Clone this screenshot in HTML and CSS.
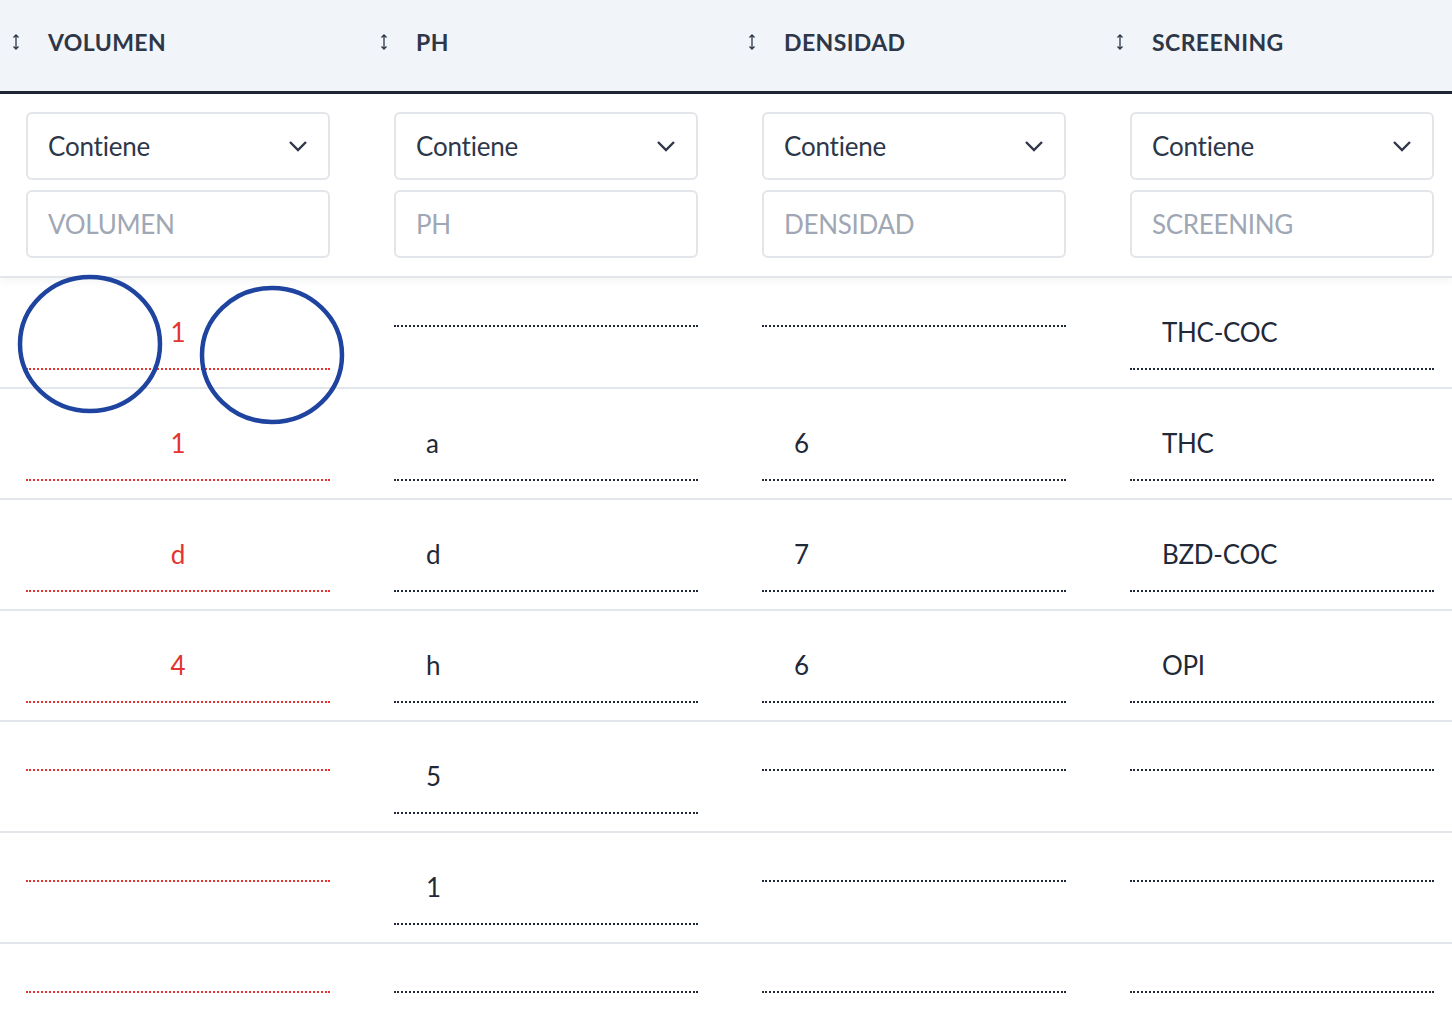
FILE: index.html
```html
<!DOCTYPE html>
<html lang="es">
<head>
  <meta charset="UTF-8">
  <title>Muestras</title>
  <link rel="stylesheet" href="styles.css">
</head>
<body>
  <div class="table">
    <!-- Column headers -->
    <div class="row head">
      <div class="th"><svg class="sort" viewBox="0 0 8 16"><path d="M4 1v14M1.5 3.5L4 1l2.5 2.5M1.5 12.5L4 15l2.5-2.5"/></svg>VOLUMEN</div>
      <div class="th"><svg class="sort" viewBox="0 0 8 16"><path d="M4 1v14M1.5 3.5L4 1l2.5 2.5M1.5 12.5L4 15l2.5-2.5"/></svg>PH</div>
      <div class="th"><svg class="sort" viewBox="0 0 8 16"><path d="M4 1v14M1.5 3.5L4 1l2.5 2.5M1.5 12.5L4 15l2.5-2.5"/></svg>DENSIDAD</div>
      <div class="th"><svg class="sort" viewBox="0 0 8 16"><path d="M4 1v14M1.5 3.5L4 1l2.5 2.5M1.5 12.5L4 15l2.5-2.5"/></svg>SCREENING</div>
    </div>

    <!-- Filters -->
    <div class="row filters">
      <div class="filter">
        <div class="select">Contiene<svg class="chev" viewBox="0 0 20 12"><path d="M2 2l8 8 8-8"/></svg></div>
        <input class="search" type="text" placeholder="VOLUMEN">
      </div>
      <div class="filter">
        <div class="select">Contiene<svg class="chev" viewBox="0 0 20 12"><path d="M2 2l8 8 8-8"/></svg></div>
        <input class="search" type="text" placeholder="PH">
      </div>
      <div class="filter">
        <div class="select">Contiene<svg class="chev" viewBox="0 0 20 12"><path d="M2 2l8 8 8-8"/></svg></div>
        <input class="search" type="text" placeholder="DENSIDAD">
      </div>
      <div class="filter">
        <div class="select">Contiene<svg class="chev" viewBox="0 0 20 12"><path d="M2 2l8 8 8-8"/></svg></div>
        <input class="search" type="text" placeholder="SCREENING">
      </div>
    </div>

    <!-- Data rows -->
    <div class="row data">
      <div class="td"><div class="val bad">1</div></div>
      <div class="td"><div class="val"></div></div>
      <div class="td"><div class="val"></div></div>
      <div class="td"><div class="val">THC-COC</div></div>
    </div>
    <div class="row data">
      <div class="td"><div class="val bad">1</div></div>
      <div class="td"><div class="val">a</div></div>
      <div class="td"><div class="val">6</div></div>
      <div class="td"><div class="val">THC</div></div>
    </div>
    <div class="row data">
      <div class="td"><div class="val bad">d</div></div>
      <div class="td"><div class="val">d</div></div>
      <div class="td"><div class="val">7</div></div>
      <div class="td"><div class="val">BZD-COC</div></div>
    </div>
    <div class="row data">
      <div class="td"><div class="val bad">4</div></div>
      <div class="td"><div class="val">h</div></div>
      <div class="td"><div class="val">6</div></div>
      <div class="td"><div class="val">OPI</div></div>
    </div>
    <div class="row data">
      <div class="td"><div class="val bad"></div></div>
      <div class="td"><div class="val">5</div></div>
      <div class="td"><div class="val"></div></div>
      <div class="td"><div class="val"></div></div>
    </div>
    <div class="row data">
      <div class="td"><div class="val bad"></div></div>
      <div class="td"><div class="val">1</div></div>
      <div class="td"><div class="val"></div></div>
      <div class="td"><div class="val"></div></div>
    </div>
    <div class="row data">
      <div class="td"><div class="val bad"></div></div>
      <div class="td"><div class="val"></div></div>
      <div class="td"><div class="val"></div></div>
      <div class="td"><div class="val"></div></div>
    </div>
  </div>

  <!-- annotation marks drawn over the table -->
  <svg class="marks" viewBox="0 0 1452 1018">
    <ellipse cx="90" cy="344" rx="70" ry="67"/>
    <ellipse cx="272" cy="355" rx="70" ry="67"/>
  </svg>
</body>
</html>
```

FILE: styles.css
```css
body {
  margin: 0;
  font-family: Lato, "Noto Sans", sans-serif;
  color: #1f2937;
  background: #fff;
  overflow: hidden;
}
.table {
  width: 1452px;
}
.row {
  display: grid;
  grid-template-columns: 368px 368px 368px 1fr;
}
.head {
  height: 91px;
  background: #f1f4f9;
  border-bottom: 3px solid #1e2535;
  align-items: center;
}
.th {
  display: flex;
  align-items: center;
  padding: 0 0 8px 12px;
  font-size: 23px;
  font-weight: 700;
  letter-spacing: 0.4px;
  color: #2d3748;
}
.sort {
  width: 8px;
  height: 16px;
  margin-right: 28px;
  fill: none;
  stroke: #2d3748;
  stroke-width: 1.3;
}
.filters {
  padding: 18px 0;
  border-bottom: 2px solid #e2e5ea;
  box-shadow: 0 4px 8px rgba(0, 0, 0, 0.04);
  position: relative;
}
.filter {
  padding-left: 26px;
  display: flex;
  flex-direction: column;
  gap: 10px;
}
.select, .search {
  box-sizing: border-box;
  width: 304px;
  height: 68px;
  border: 2px solid #e2e5ea;
  border-radius: 6px;
  background: #fff;
  font-family: inherit;
  font-size: 26px;
  color: #2d3748;
  padding: 0 20px;
}
.select {
  display: flex;
  align-items: center;
  justify-content: space-between;
  letter-spacing: -0.2px;
}
.chev {
  width: 20px;
  height: 12px;
  fill: none;
  stroke: #2d3748;
  stroke-width: 2.4;
}
.search::placeholder {
  color: #a0a7b4;
  letter-spacing: -0.3px;
}
.data {
  box-sizing: border-box;
  height: 111px;
  padding-top: 36px;
  border-bottom: 2px solid #e2e5ea;
}
.td {
  padding-left: 26px;
}
.val {
  width: 304px;
  box-sizing: border-box;
  padding: 0 0 18px 32px;
  line-height: 36px;
  font-size: 26px;
  letter-spacing: -0.3px;
  border-bottom: 2px dotted #1f2937;
}
.val:empty {
  padding-bottom: 11px;
}
.val.bad {
  color: #e3342f;
  text-align: center;
  padding-left: 0;
  border-bottom-color: #e3342f;
}
.marks {
  position: absolute;
  top: 0;
  left: 0;
  width: 1452px;
  height: 1018px;
  pointer-events: none;
  fill: none;
  stroke: #1e44a0;
  stroke-width: 4.5;
}
```
